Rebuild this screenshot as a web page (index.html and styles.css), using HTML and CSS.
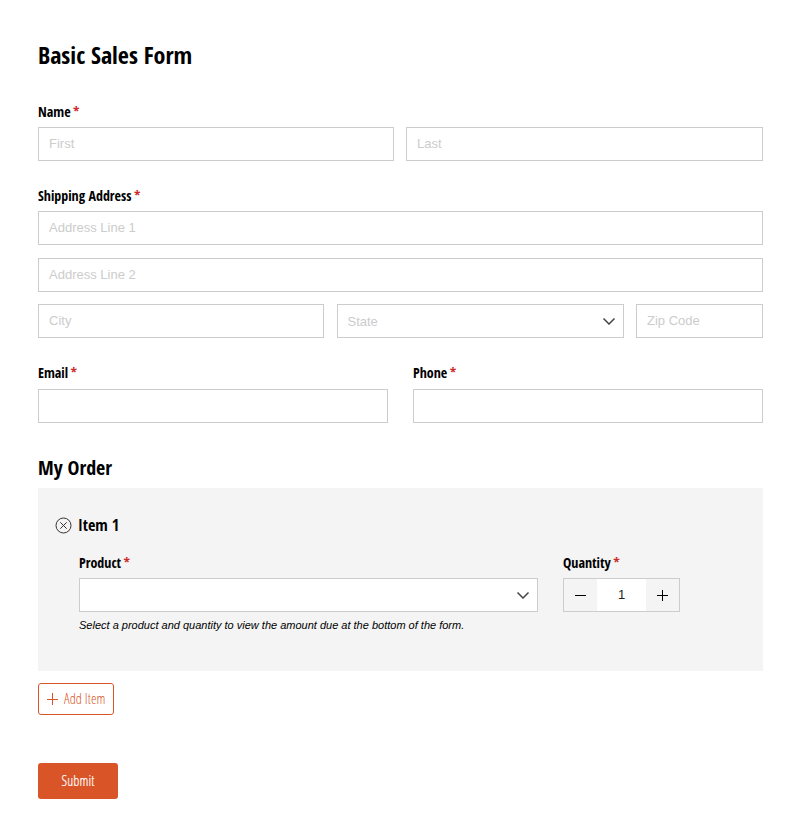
FILE: index.html
```html
<!DOCTYPE html>
<html lang="en">
<head>
  <meta charset="UTF-8" />
  <title>Basic Sales Form</title>
  <meta name="viewport" content="width=device-width, initial-scale=1.0" />
  <link rel="stylesheet" href="styles.css">
</head>
<body>

<form class="form">
  <h1>Basic Sales Form</h1>

  <!-- Name -->
  <div class="field name">
    <label for="first">Name <span class="req">*</span></label>
    <div class="row name-row">
      <input type="text" id="first" placeholder="First">
      <input type="text" placeholder="Last">
    </div>
  </div>

  <!-- Shipping address -->
  <div class="field address">
    <label for="line1">Shipping Address <span class="req">*</span></label>
    <input type="text" id="line1" placeholder="Address Line 1">
    <input type="text" class="line2" placeholder="Address Line 2">
    <div class="row city-row">
      <input type="text" placeholder="City">
      <div class="select">
        <span class="hint">State</span>
        <svg class="chevron" width="14" height="8" viewBox="0 0 14 8"><path d="M1.5 1.5l5.5 5.5L12.500 1.500"/></svg>
      </div>
      <input type="text" placeholder="Zip Code">
    </div>
  </div>

  <!-- Contact -->
  <div class="row contact">
    <div class="field">
      <label for="email">Email <span class="req">*</span></label>
      <input type="text" id="email">
    </div>
    <div class="field">
      <label for="phone">Phone <span class="req">*</span></label>
      <input type="text" id="phone">
    </div>
  </div>

  <!-- Order -->
  <h2>My Order</h2>
  <div class="order">
    <div class="item-head">
      <svg class="remove" width="17" height="17" viewBox="0 0 17 17"><circle cx="8.5" cy="8.5" r="7.5"/><path d="M5.300 5.300l6.400 6.400M11.700 5.300l-6.400 6.400"/></svg>
      <h3>Item 1</h3>
    </div>
    <div class="row item-row">
      <div class="field">
        <label>Product <span class="req">*</span></label>
        <div class="select">
          <svg class="chevron" width="14" height="8" viewBox="0 0 14 8"><path d="M1.5 1.5l5.5 5.5L12.500 1.500"/></svg>
        </div>
        <p class="help">Select a product and quantity to view the amount due at the bottom of the form.</p>
      </div>
      <div class="field">
        <label for="qty">Quantity <span class="req">*</span></label>
        <div class="stepper">
          <button type="button"><svg width="11" height="11" viewBox="0 0 11 11"><path d="M0 5.5h11"/></svg></button>
          <input type="text" id="qty" value="1">
          <button type="button"><svg width="11" height="11" viewBox="0 0 11 11"><path d="M0 5.5h11M5.5 0v11"/></svg></button>
        </div>
      </div>
    </div>
  </div>

  <button type="button" class="add"><svg width="11" height="12" viewBox="0 0 11 12"><path d="M0 6.500h11M5.500 0v12"/></svg><span>Add Item</span></button>
  <button type="button" class="submit">Submit</button>
</form>

</body>
</html>
```
FILE: styles.css
```css
* {
  box-sizing: border-box;
}
body {
  margin: 0;
  background: #fff;
  color: #000;
  font-family: "Open Sans Condensed", "Open Sans", sans-serif;
  font-stretch: 75%;
}
.form {
  width: 725px;
  margin-left: 38px;
  padding-top: 38px;
}
h1, h2, h3, p {
  margin: 0;
  font-weight: 700;
}
h1 {
  font-size: 24px;
  line-height: 34px;
}
h2 {
  margin-top: 33px;
  font-size: 20px;
  line-height: 24px;
}
h3 {
  font-size: 16px;
  line-height: 20px;
}
label {
  display: block;
  height: 25px;
  font-size: 14px;
  font-weight: 700;
  line-height: 19px;
  white-space: nowrap;
}
.req {
  margin-left: -1px;
  color: #cc2a2a;
}
.row {
  display: grid;
}
input {
  display: block;
  width: 100%;
  height: 34px;
  margin: 0;
  padding: 0 10px 1px;
  border: 1px solid #ccc;
  border-radius: 0;
  background: #fff;
  font-family: "Liberation Sans", Arial, sans-serif;
  font-size: 13px;
  outline: none;
}
input::placeholder {
  color: #ccc;
  opacity: 1;
}
.name {
  margin-top: 30px;
}
.name-row {
  grid-template-columns: 356px 357px;
  column-gap: 12px;
}
.address {
  margin-top: 25px;
}
.line2 {
  margin-top: 13px;
}
.city-row {
  grid-template-columns: 286px 287px 127px;
  column-gap: 12.5px;
  margin-top: 12px;
}
.contact {
  grid-template-columns: 350px 350px;
  column-gap: 25px;
  margin-top: 25px;
}
.contact label {
  height: 26px;
}
.select {
  display: flex;
  align-items: center;
  height: 34px;
  padding: 0 7px 0 10px;
  border: 1px solid #ccc;
  background: #fff;
  font-family: "Liberation Sans", Arial, sans-serif;
  font-size: 13px;
}
.hint {
  color: #ccc;
}
.chevron {
  margin-left: auto;
  fill: none;
  stroke: #444;
  stroke-width: 1.5;
}
.order {
  height: 183px;
  margin-top: 8px;
  padding: 27px 0 0 17px;
  background: #f4f4f4;
}
.item-head {
  display: flex;
  align-items: center;
  gap: 6px;
}
.remove {
  fill: none;
  stroke: #333;
}
.item-row {
  grid-template-columns: 459px 117px;
  column-gap: 25px;
  margin: 18px 0 0 24px;
}
.help {
  margin-top: 6px;
  font-family: "Liberation Sans", Arial, sans-serif;
  font-size: 11px;
  font-style: italic;
  font-weight: 400;
  line-height: 14px;
}
button {
  margin: 0;
  padding: 0;
  border: 0;
  font-family: "Open Sans Condensed Light", "Open Sans", sans-serif;
  font-stretch: 75%;
  font-size: 14px;
  font-weight: 300;
}
button svg {
  flex: none;
  fill: none;
  stroke: currentColor;
}
.stepper {
  display: flex;
  height: 34px;
  border: 1px solid #ccc;
}
.stepper button {
  display: flex;
  flex: 0 0 33px;
  align-items: center;
  justify-content: center;
  background: #f4f4f4;
  color: #000;
}
.stepper input {
  height: 32px;
  padding: 0 0 1px;
  border: 0;
  color: #222;
  text-align: center;
}
.add {
  display: flex;
  align-items: center;
  gap: 6px;
  width: 76px;
  height: 32px;
  margin-top: 12px;
  padding-left: 8px;
  border: 1px solid #d95427;
  border-radius: 3px;
  background: #fff;
  color: #d95427;
  white-space: nowrap;
}
.add span {
  padding-bottom: 2px;
  letter-spacing: 0.1px;
}
.submit {
  display: block;
  width: 80px;
  height: 36px;
  margin-top: 48px;
  padding-bottom: 2px;
  border-radius: 3px;
  background: #d95427;
  color: #fff;
  letter-spacing: 0.1px;
  -webkit-text-stroke: 0.2px #fff;
}
```
